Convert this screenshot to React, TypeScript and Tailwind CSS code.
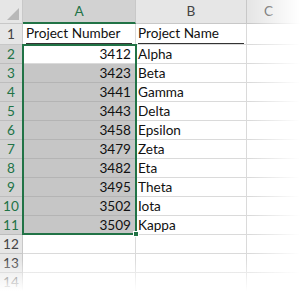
import React from "react";

const rows: [string, string][] = [
  ["3412", "Alpha"],
  ["3423", "Beta"],
  ["3441", "Gamma"],
  ["3443", "Delta"],
  ["3458", "Epsilon"],
  ["3479", "Zeta"],
  ["3482", "Eta"],
  ["3495", "Theta"],
  ["3502", "Iota"],
  ["3509", "Kappa"],
];

export default function App() {
  const font = { fontFamily: "Lato, 'Open Sans', sans-serif" };
  return (
    <div className="relative w-[300px] h-[291px] overflow-hidden bg-white text-[13.6px] text-[#111]" style={font}>
      {/* column header row */}
      <div className="flex h-[24px]">
        <div className="relative w-[23px] shrink-0 bg-[#e6e6e6] border-r border-b border-[#c8c8c8]">
          <div className="absolute right-[3px] bottom-[3px] w-0 h-0 border-l-[12px] border-l-transparent border-b-[12px] border-b-[#b8b8b8]" />
        </div>
        <div className="w-[113px] shrink-0 flex items-center justify-center bg-[#d2d2d2] text-[#217346] border-r border-[#c8c8c8] border-b-2 border-b-[#217346]">
          A
        </div>
        <div className="w-[111px] shrink-0 flex items-center justify-center bg-[#e6e6e6] text-[#444] border-r border-b border-[#c8c8c8]">
          B
        </div>
        <div className="flex-1 flex items-center justify-center bg-[#e6e6e6] text-[#444] border-b border-[#c8c8c8] pr-[10px]">
          C
        </div>
      </div>
      {/* row 1 */}
      <div className="flex h-[21px]">
        <div className="w-[23px] shrink-0 flex items-center justify-center bg-[#e6e6e6] text-[#444] border-r border-b border-[#c8c8c8]">
          1
        </div>
        <div className="w-[113px] shrink-0 border-r border-b border-[#dadada] px-[3px] flex">
          <div className="flex-1 border-b border-[#333] leading-[19px] whitespace-nowrap">Project Number</div>
        </div>
        <div className="w-[111px] shrink-0 border-r border-b border-[#dadada] px-[2px] flex">
          <div className="flex-1 border-b border-[#333] leading-[19px] whitespace-nowrap">Project Name</div>
        </div>
        <div className="flex-1 border-b border-[#dadada]" />
      </div>
      {/* data rows */}
      {rows.map(([n, name], i) => (
        <div key={n} className="flex h-[19px]">
          <div className="w-[23px] shrink-0 flex items-center justify-center bg-[#d2d2d2] text-[#217346] border-r border-b border-[#bdbdbd]">
            {i + 2}
          </div>
          <div
            className={`w-[113px] shrink-0 border-r border-b flex items-center justify-end pr-[4px] ${
              i === 0 ? "bg-white border-[#dadada]" : "bg-[#c6c6c6] border-[#b4b4b4]"
            }`}
          >
            {n}
          </div>
          <div className="w-[111px] shrink-0 border-r border-b border-[#dadada] flex items-center pl-[2px]">{name}</div>
          <div className="flex-1 border-b border-[#dadada]" />
        </div>
      ))}
      {/* empty rows */}
      {[12, 13, 14].map((r) => (
        <div key={r} className="flex h-[19px]">
          <div className="w-[23px] shrink-0 flex items-center justify-center bg-[#e6e6e6] text-[#444] border-r border-b border-[#c8c8c8]">
            {r}
          </div>
          <div className="w-[113px] shrink-0 border-r border-b border-[#dadada]" />
          <div className="w-[111px] shrink-0 border-r border-b border-[#dadada]" />
          <div className="flex-1 border-b border-[#dadada]" />
        </div>
      ))}
      {/* selection border */}
      <div className="absolute left-[22px] top-[44px] w-[115px] h-[191px] border-2 border-[#217346] pointer-events-none">
        <div className="absolute right-[-4px] bottom-[-4px] w-[6px] h-[6px] bg-[#217346] border border-white" />
      </div>
      {/* fades */}
      <div className="absolute right-0 top-0 w-[50px] h-full bg-gradient-to-r from-white/0 to-white pointer-events-none" />
      <div className="absolute left-0 bottom-0 w-full h-[32px] bg-gradient-to-b from-white/0 to-white pointer-events-none" />
    </div>
  );
}
